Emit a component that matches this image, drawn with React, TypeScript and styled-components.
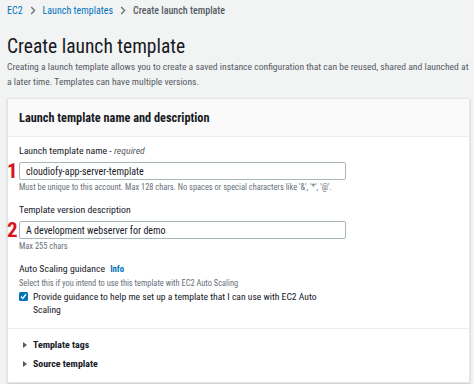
import styled, { createGlobalStyle } from "styled-components";

const GlobalStyle = createGlobalStyle`
  html, body {
    margin: 0;
    padding: 0;
    background: #f2f3f3;
    font-family: "Roboto Condensed", Roboto, sans-serif;
    color: #16191f;
  }
`;

const Page = styled.div`
  width: 474px;
  height: 384px;
  padding: 0 4px 0 7px;
  box-sizing: border-box;
  overflow: hidden;
`;

const Breadcrumbs = styled.nav`
  display: flex;
  align-items: center;
  gap: 7px;
  height: 20px;
  font-size: 10px;
`;

const Crumb = styled.span<{ link?: boolean }>`
  color: ${(p) => (p.link ? "#0073bb" : "#545b64")};
  font-weight: ${(p) => (p.link ? 400 : 500)};
`;

const Chevron = () => (
  <svg width="6" height="9" viewBox="0 0 6 9">
    <path d="M1.2 1 L4.6 4.5 L1.2 8" fill="none" stroke="#687078" strokeWidth="1.3" />
  </svg>
);

const Title = styled.h1`
  margin: 15px 0 0;
  font-size: 19.5px;
  font-weight: 400;
  line-height: 24px;
  color: #16191f;
`;

const Intro = styled.p`
  margin: 0;
  font-size: 9.6px;
  line-height: 15px;
  color: #545b64;
`;

const Panel = styled.section`
  margin-top: 9px;
  background: #ffffff;
  border: 1px solid #e3e6e6;
  box-shadow: 0 1px 2px rgba(0, 22, 40, 0.2);
`;

const PanelHeader = styled.header`
  height: 37px;
  display: flex;
  align-items: center;
  padding: 0 11px;
  background: #fafafa;
  border-bottom: 1px solid #eaeded;
  font-size: 12.3px;
  font-weight: 700;
  color: #16191f;
`;

const PanelBody = styled.div`
  width: 327px;
  padding: 7px 11px 12px;
  display: flex;
  flex-direction: column;
`;

const Field = styled.div<{ top?: number }>`
  margin-top: ${(p) => p.top ?? 0}px;
  display: flex;
  flex-direction: column;
`;

const Label = styled.label`
  font-size: 9.8px;
  line-height: 14px;
  color: #16191f;
  em {
    font-style: italic;
    color: #545b64;
  }
`;

const InputRow = styled.div`
  position: relative;
  margin-top: 4px;
`;

const Marker = styled.span`
  position: absolute;
  left: -12px;
  top: -3px;
  font-size: 21px;
  font-weight: 700;
  line-height: 24px;
  color: #d9141c;
`;

const TextInput = styled.div`
  height: 18px;
  box-sizing: border-box;
  border: 1px solid #aab7b8;
  border-radius: 2px;
  padding: 0 6px;
  display: flex;
  align-items: center;
  font-size: 10px;
  color: #16191f;
`;

const Hint = styled.div`
  margin-top: 1px;
  font-size: 8.4px;
  line-height: 12px;
  color: #687078;
`;

const Info = styled.span`
  margin-left: 5px;
  font-size: 8.8px;
  font-weight: 700;
  color: #0073bb;
`;

const CheckRow = styled.div`
  display: flex;
  gap: 5px;
  margin-top: 1px;
`;

const Box = styled.span`
  flex: none;
  width: 9px;
  height: 9px;
  margin-top: 2px;
  border-radius: 1.5px;
  background: #0073bb;
  display: flex;
  align-items: center;
  justify-content: center;
`;

const CheckText = styled.span`
  font-size: 9.6px;
  line-height: 13px;
  color: #16191f;
`;

const Expanders = styled.div`
  border-top: 1px solid #eaeded;
  padding: 6px 0 9px 15px;
  display: flex;
  flex-direction: column;
`;

const Expander = styled.div`
  display: flex;
  align-items: center;
  gap: 6px;
  height: 19px;
  font-size: 9.9px;
  font-weight: 700;
  color: #16191f;
`;

const Caret = () => (
  <svg width="4" height="6" viewBox="0 0 4 6">
    <path d="M0 0 L4 3 L0 6 Z" fill="#545b64" />
  </svg>
);

export default function App() {
  return (
    <Page>
      <GlobalStyle />
      <Breadcrumbs>
        <Crumb link>EC2</Crumb>
        <Chevron />
        <Crumb link>Launch templates</Crumb>
        <Chevron />
        <Crumb>Create launch template</Crumb>
      </Breadcrumbs>
      <Title>Create launch template</Title>
      <Intro>
        Creating a launch template allows you to create a saved instance configuration that can be
        reused, shared and launched at a later time. Templates can have multiple versions.
      </Intro>
      <Panel>
        <PanelHeader>Launch template name and description</PanelHeader>
        <PanelBody>
          <Field>
            <Label>
              Launch template name - <em>required</em>
            </Label>
            <InputRow>
              <Marker>1</Marker>
              <TextInput>cloudiofy-app-server-template</TextInput>
            </InputRow>
            <Hint>
              Must be unique to this account. Max 128 chars. No spaces or special characters like '&amp;', '*', '@'.
            </Hint>
          </Field>
          <Field top={10}>
            <Label>Template version description</Label>
            <InputRow>
              <Marker>2</Marker>
              <TextInput>A development webserver for demo</TextInput>
            </InputRow>
            <Hint>Max 255 chars</Hint>
          </Field>
          <Field top={10}>
            <Label>
              Auto Scaling guidance<Info>Info</Info>
            </Label>
            <Hint>Select this if you intend to use this template with EC2 Auto Scaling</Hint>
            <CheckRow>
              <Box>
                <svg width="7" height="7" viewBox="0 0 7 7">
                  <path d="M1 3.6 L2.8 5.4 L6 1.3" fill="none" stroke="#fff" strokeWidth="1.4" />
                </svg>
              </Box>
              <CheckText>
                Provide guidance to help me set up a template that I can use with EC2 Auto Scaling
              </CheckText>
            </CheckRow>
          </Field>
        </PanelBody>
        <Expanders>
          <Expander>
            <Caret />
            Template tags
          </Expander>
          <Expander>
            <Caret />
            Source template
          </Expander>
        </Expanders>
      </Panel>
    </Page>
  );
}
